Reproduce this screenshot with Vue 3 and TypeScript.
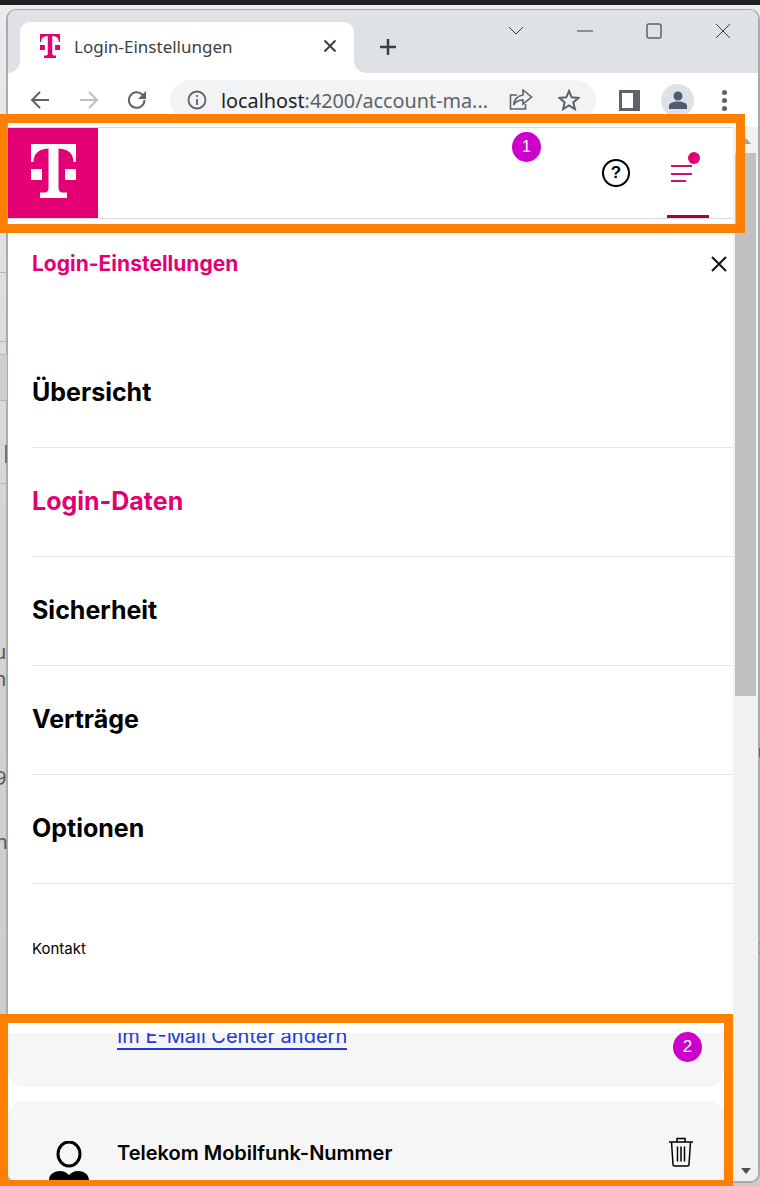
<template>
  <div class="screen">
    <div class="topbar"></div>

    <!-- bits of the page behind the browser window -->
    <div class="behind">
      <div class="band"></div>
      <i v-for="top in behindRules" :key="top" class="rule" :style="{ top: top + 'px' }"></i>
      <i class="tick"></i>
      <span
        v-for="frag in behindText"
        :key="frag.text"
        class="frag"
        :style="{ top: frag.top + 'px', left: frag.left + 'px' }"
      >{{ frag.text }}</span>
    </div>

    <div class="window">
      <div class="tabstrip">
        <div class="tab">
          <svg class="favicon" viewBox="0 0 45 54" aria-hidden="true">
            <path d="M0 0h45v18h-2.500c-.2-8-4.500-13-15-13.500V43c0 4 1.500 5.500 4.500 5.500H36V54H9v-5.500h4.500c3 0 4-1.500 4-5.500V4.500C7 5 2.700 10 2.500 18H0z" />
            <path d="M0 25h11v11H0zM34 25h11v11H34z" />
          </svg>
          <span class="tab-title">Login-Einstellungen</span>
          <svg class="tab-close" viewBox="0 0 14 14" aria-hidden="true">
            <path d="M1.500 1.500l11 11M12.500 1.500l-11 11" />
          </svg>
        </div>
        <svg class="new-tab" viewBox="0 0 18 18" aria-hidden="true">
          <path d="M9 1v16M1 9h16" />
        </svg>
        <div class="win-controls">
          <svg viewBox="0 0 16 10" class="ctl chev" aria-hidden="true"><path d="M1 1l7 7 7-7" /></svg>
          <svg viewBox="0 0 16 2" class="ctl min" aria-hidden="true"><path d="M0 1h16" /></svg>
          <svg viewBox="0 0 16 16" class="ctl max" aria-hidden="true"><rect x="1" y="1" width="14" height="14" rx="2" /></svg>
          <svg viewBox="0 0 16 16" class="ctl cls" aria-hidden="true"><path d="M1 1l14 14M15 1L1 15" /></svg>
        </div>
      </div>

      <div class="toolbar">
        <svg class="nav back" viewBox="0 0 22 22" aria-hidden="true"><path d="M20 11H3M11 3l-8 8 8 8" /></svg>
        <svg class="nav fwd" viewBox="0 0 22 22" aria-hidden="true"><path d="M2 11h17M11 3l8 8-8 8" /></svg>
        <svg class="nav reload" viewBox="0 0 22 22" aria-hidden="true">
          <path d="M18.500 11a7.800 7.800 0 1 1-2.300-5.500L18.500 8" />
          <path class="fill" d="M20 2v8h-8z" />
        </svg>
        <div class="omnibox">
          <svg class="info" viewBox="0 0 20 20" aria-hidden="true">
            <circle cx="10" cy="10" r="8.500" />
            <path d="M10 9v6M10 5v2" />
          </svg>
          <span class="url"><b>localhost</b>:4200/account-ma...</span>
          <svg class="share" viewBox="0 0 24 22" aria-hidden="true">
            <path d="M8 6H1.500v14h15v-5" />
            <path d="M14 1l8.500 7-8.500 7v-4c-4 0-7 1-9.500 5 .6-5 3.500-9 9.500-10z" />
          </svg>
          <svg class="star" viewBox="0 0 22 22" aria-hidden="true">
            <path d="M11 2l2.700 6.300 6.800.6-5.200 4.500 1.600 6.700L11 16.500l-5.900 3.600 1.600-6.700L1.500 8.900l6.800-.6z" />
          </svg>
        </div>
        <svg class="side" viewBox="0 0 21 21" aria-hidden="true">
          <path fill-rule="evenodd" d="M0 0h21v21H0zM3 3v15h11V3z" />
        </svg>
        <div class="avatar">
          <svg viewBox="0 0 20 20" aria-hidden="true">
            <circle cx="10" cy="6" r="4.500" />
            <path d="M1 19v-3c0-3 4-4.500 9-4.500s9 1.500 9 4.500v3z" />
          </svg>
        </div>
        <div class="kebab"><i></i><i></i><i></i></div>
      </div>

      <div class="page">
        <div class="main">
          <header class="site-header">
            <div class="logo">
              <svg viewBox="0 0 45 54" aria-hidden="true">
                <path d="M0 0h45v18h-2.500c-.2-8-4.500-13-15-13.500V43c0 4 1.500 5.500 4.500 5.500H36V54H9v-5.500h4.500c3 0 4-1.500 4-5.500V4.500C7 5 2.700 10 2.500 18H0z" />
                <path d="M0 25h11v11H0zM34 25h11v11H34z" />
              </svg>
            </div>
            <div class="header-actions">
              <div class="help">?</div>
              <div class="burger">
                <i class="l1"></i><i class="l2"></i><i class="l3"></i>
                <span class="dot"></span>
              </div>
            </div>
          </header>

          <section class="menu">
            <div class="menu-head">
              <span class="menu-title">Login-Einstellungen</span>
              <svg class="menu-close" viewBox="0 0 16 16" aria-hidden="true"><path d="M1 1l14 14M15 1L1 15" /></svg>
            </div>
            <ul class="menu-list">
              <li v-for="item in items" :key="item" :class="{ active: item === active }">{{ item }}</li>
            </ul>
            <div class="contact">Kontakt</div>
          </section>

          <div class="cards">
            <div class="card card-cut">
              <a class="link">Im E-Mail Center ändern</a>
            </div>
            <div class="card card-next">
              <svg class="person" viewBox="0 0 42 44" aria-hidden="true">
                <ellipse class="head" cx="21" cy="13" rx="11" ry="12" />
                <path d="M1 44V39c0-6 6-9 11-9 4 0 7 2 9 4 2-2 5-4 9-4 5 0 11 3 11 9v5z" />
              </svg>
              <span class="card-title">Telekom Mobilfunk-Nummer</span>
              <svg class="trash" viewBox="0 0 26 30" aria-hidden="true">
                <path d="M1 5h24M9 5V1.500h8V5M3.500 5l1.500 22.500c0 1 .8 1.500 1.500 1.500h13c.7 0 1.500-.5 1.500-1.500L22.500 5M9.500 9.500v15M13 9.500v15M16.500 9.500v15" />
              </svg>
            </div>
          </div>
        </div>

        <div class="scrollbar">
          <span class="arrow up"></span>
          <div class="thumb"></div>
          <span class="arrow down"></span>
        </div>
      </div>
    </div>

    <!-- slivers of the page behind, on the right edge -->
    <i class="sliver s1"></i>
    <i class="sliver s2"></i>
    <i class="sliver s3"></i>

    <!-- annotations on top of the screenshot -->
    <div class="mark mark-one"></div>
    <div class="mark mark-two"></div>
    <span class="badge badge-one">1</span>
    <span class="badge badge-two">2</span>
  </div>
</template>

<script setup lang="ts">
const items: string[] = ["Übersicht", "Login-Daten", "Sicherheit", "Verträge", "Optionen"];
const active = "Login-Daten";

const behindRules: number[] = [272, 341, 354, 400, 483];
const behindText = [
  { text: "u", top: 640, left: -6 },
  { text: "n", top: 667, left: -6 },
  { text: "9", top: 766, left: -5 },
  { text: "m", top: 830, left: -11 },
];
</script>

<style scoped>
.screen {
  position: relative;
  width: 760px;
  height: 1186px;
  overflow: hidden;
  background: linear-gradient(#ececec, #d4d4d4 45%, #cbcbcb);
  font-family: "Noto Sans", "Open Sans", sans-serif;
}

.topbar {
  height: 5px;
  background: #202124;
}

.behind {
  position: absolute;
  left: 0;
  top: 0;
  width: 7px;
  height: 100%;
  overflow: hidden;
}

.band {
  position: absolute;
  left: 0;
  top: 354px;
  width: 7px;
  height: 46px;
  background: #ccced2;
}

.rule {
  position: absolute;
  left: 0;
  width: 7px;
  height: 1px;
  background: #b4b6ba;
}

.tick {
  position: absolute;
  left: 5px;
  top: 445px;
  width: 2px;
  height: 18px;
  background: #6e7074;
}

.frag {
  position: absolute;
  font-size: 20px;
  line-height: 24px;
  color: #55585c;
}

.window {
  display: flex;
  flex-direction: column;
  height: 1174px;
  box-sizing: border-box;
  margin: 4px 0 0 6px;
  border: 2px solid #a9abad;
  border-top-width: 1px;
  border-radius: 10px;
  overflow: hidden;
  background: #fff;
}

.tabstrip {
  display: flex;
  flex: none;
  align-items: flex-end;
  height: 63px;
  padding-left: 12px;
  background: #dee1e6;
}

.tab {
  position: relative;
  display: flex;
  flex: none;
  align-items: center;
  width: 334px;
  height: 51px;
  padding: 0 17px 3px 20px;
  box-sizing: border-box;
  border-radius: 10px 10px 0 0;
  background: #fff;
}

.tab::before,
.tab::after {
  content: "";
  position: absolute;
  bottom: 0;
  width: 12px;
  height: 12px;
}

.tab::before {
  left: -12px;
  background: radial-gradient(circle at 0 0, #dee1e6 11.500px, #fff 12px);
}

.tab::after {
  right: -12px;
  background: radial-gradient(circle at 100% 0, #dee1e6 11.500px, #fff 12px);
}

.favicon {
  flex: none;
  width: 20px;
  height: 24px;
  fill: #e20074;
}

.tab-title {
  margin-left: 14px;
  font-size: 17px;
  color: #3c4043;
}

.tab-close {
  flex: none;
  width: 14px;
  height: 14px;
  margin-left: auto;
  fill: none;
  stroke: #3c4043;
  stroke-width: 2;
}

.new-tab {
  flex: none;
  width: 18px;
  height: 18px;
  margin: 0 0 17px 25px;
  fill: none;
  stroke: #3c4043;
  stroke-width: 2.500;
}

.win-controls {
  display: flex;
  align-self: flex-start;
  align-items: center;
  margin-left: auto;
  height: 42px;
  padding-right: 27px;
  gap: 53px;
}

.ctl {
  width: 16px;
  height: 16px;
  fill: none;
  stroke: #3a3c3f;
  stroke-width: 1;
}

.chev {
  height: 10px;
}

.min {
  height: 2px;
}

.max {
  stroke: #5f6368;
  stroke-width: 1.500;
}

.toolbar {
  display: flex;
  flex: none;
  align-items: center;
  height: 54px;
  box-sizing: border-box;
  background: #fff;
}

.nav {
  flex: none;
  width: 22px;
  height: 22px;
  fill: none;
  stroke: #5f6368;
  stroke-width: 2;
}

.nav.back {
  margin-left: 21px;
}

.nav.fwd {
  margin-left: 27px;
  stroke: #bdc1c6;
}

.nav.reload {
  margin-left: 26px;
}

.nav .fill {
  fill: #5f6368;
  stroke: none;
}

.omnibox {
  display: flex;
  flex: none;
  align-items: center;
  width: 426px;
  height: 41px;
  margin-left: 22px;
  padding: 0 16px 0 17px;
  box-sizing: border-box;
  border-radius: 21px;
  background: #f1f3f4;
}

.info {
  flex: none;
  width: 20px;
  height: 20px;
  fill: none;
  stroke: #5f6368;
  stroke-width: 1.800;
}

.url {
  margin-left: 14px;
  font-size: 19.800px;
  white-space: nowrap;
  color: #5f6368;
}

.url b {
  font-weight: 400;
  color: #202124;
}

.share {
  flex: none;
  width: 24px;
  height: 22px;
  margin-left: auto;
  fill: none;
  stroke: #5f6368;
  stroke-width: 1.600;
}

.star {
  flex: none;
  width: 22px;
  height: 22px;
  margin-left: 25px;
  fill: none;
  stroke: #5f6368;
  stroke-width: 2;
}

.side {
  flex: none;
  width: 21px;
  height: 21px;
  margin-left: 23px;
  fill: #5f6368;
}

.avatar {
  display: flex;
  flex: none;
  align-items: center;
  justify-content: center;
  width: 33px;
  height: 33px;
  margin-left: 21px;
  border-radius: 50%;
  background: #dee1e6;
}

.avatar svg {
  width: 20px;
  height: 20px;
  fill: #4f5b70;
}

.kebab {
  display: flex;
  flex: none;
  flex-direction: column;
  gap: 3px;
  margin-left: 28px;
}

.kebab i {
  width: 5px;
  height: 5px;
  border-radius: 50%;
  background: #5f6368;
}

.page {
  display: flex;
  flex: 1;
  min-height: 0;
}

.main {
  display: flex;
  flex: 1;
  flex-direction: column;
  min-width: 0;
  background: #fff;
}

.site-header {
  display: flex;
  flex: none;
  height: 92px;
  box-sizing: border-box;
  border-top: 1px solid #d9d9d9;
  border-bottom: 1px solid #d9d9d9;
}

.logo {
  display: flex;
  align-items: center;
  justify-content: center;
  width: 90px;
  height: 90px;
  background: #e20074;
}

.logo svg {
  width: 45px;
  height: 54px;
  margin-bottom: 4px;
  fill: #fff;
}

.header-actions {
  display: flex;
  align-items: flex-start;
  margin-left: auto;
  padding-right: 24px;
}

.help {
  width: 24px;
  height: 24px;
  margin: 31px 37px 0 0;
  border: 2px solid #000;
  border-radius: 50%;
  font-family: "Liberation Sans", sans-serif;
  font-size: 17px;
  font-weight: 700;
  line-height: 24px;
  text-align: center;
  color: #000;
}

.burger {
  position: relative;
  display: flex;
  flex-direction: column;
  width: 42px;
  height: 90px;
  box-sizing: border-box;
  padding: 37px 0 0 4px;
  gap: 5.500px;
  border-bottom: 3px solid #a10050;
}

.burger i {
  display: block;
  height: 2px;
  background: #d0106f;
}

.l1 {
  width: 21px;
}

.l2 {
  width: 21px;
}

.l3 {
  width: 15px;
}

.dot {
  position: absolute;
  top: 24px;
  left: 21px;
  width: 12px;
  height: 12px;
  border-radius: 50%;
  background: #e20074;
}

.menu {
  flex: none;
  height: 814px;
  padding-left: 24px;
  box-sizing: border-box;
}

.menu-head {
  display: flex;
  align-items: center;
  justify-content: space-between;
  height: 88px;
  margin-bottom: 28px;
}

.menu-title {
  font-family: "Inter", sans-serif;
  font-size: 21px;
  font-weight: 700;
  color: #e20074;
}

.menu-close {
  width: 16px;
  height: 16px;
  margin: 2px 6px 0 0;
  fill: none;
  stroke: #111;
  stroke-width: 2;
}

.menu-list {
  margin: 0;
  padding: 0;
  list-style: none;
}

.menu-list li {
  height: 109px;
  box-sizing: border-box;
  border-bottom: 1px solid #e5e5e5;
  padding-top: 35px;
  font-family: "Inter", sans-serif;
  font-size: 25px;
  font-weight: 700;
  line-height: 36px;
  color: #000;
}

.menu-list li:first-child {
  padding-top: 39px;
  height: 113px;
}

.menu-list li.active {
  color: #e20074;
}

.contact {
  padding-top: 55px;
  font-family: "Inter", sans-serif;
  font-size: 15px;
  line-height: 20px;
  color: #000;
}

.cards {
  flex: 1;
  min-height: 0;
  overflow: hidden;
  padding-right: 9px;
  background: #fff;
}

.card {
  background: #f6f6f6;
  overflow: hidden;
}

.card-cut {
  height: 54px;
  padding-left: 109px;
  border-radius: 0 0 16px 16px;
}

.link {
  display: block;
  width: fit-content;
  margin-top: -9px;
  border-bottom: 2px solid #2238df;
  font-family: "Inter", sans-serif;
  font-size: 20px;
  line-height: 24px;
  color: #2238df;
}

.card-next {
  display: flex;
  align-items: flex-start;
  height: 110px;
  margin-top: 14px;
  border-radius: 16px 16px 0 0;
}

.person {
  flex: none;
  width: 42px;
  height: 44px;
  margin: 40px 0 0 40px;
  fill: #000;
}

.head {
  fill: none;
  stroke: #000;
  stroke-width: 3;
}

.card-title {
  margin: 38px 0 0 27px;
  font-family: "Inter", sans-serif;
  font-size: 20px;
  font-weight: 600;
  line-height: 28px;
  color: #000;
}

.trash {
  flex: none;
  width: 26px;
  height: 30px;
  margin: 36px 30px 0 auto;
  fill: none;
  stroke: #000;
  stroke-width: 1.500;
}

.scrollbar {
  display: flex;
  flex: none;
  flex-direction: column;
  width: 25px;
  background: #f1f1f1;
}

.arrow {
  flex: none;
  width: 0;
  height: 0;
  margin: 0 auto;
  border-left: 5px solid transparent;
  border-right: 5px solid transparent;
}

.arrow.up {
  margin-top: 11px;
  margin-bottom: 9px;
  border-bottom: 6px solid #a3a3a3;
}

.arrow.down {
  margin-top: auto;
  margin-bottom: 7px;
  border-top: 6px solid #505050;
}

.thumb {
  flex: none;
  width: 21px;
  height: 543px;
  margin-left: 2px;
  background: #c1c1c1;
}

.sliver {
  position: absolute;
  right: 0;
  width: 1px;
}

.s1 {
  top: 748px;
  height: 9px;
  background: #3a6d9a;
}

.s2 {
  top: 943px;
  height: 1px;
  background: #5a88c8;
}

.s3 {
  top: 952px;
  height: 1px;
  background: #5a88c8;
}

.mark {
  position: absolute;
  box-sizing: border-box;
  border: 9px solid #ff8000;
}

.mark-one {
  left: -2px;
  top: 114px;
  width: 747px;
  height: 119px;
}

.mark-two {
  left: -1px;
  top: 1014px;
  width: 734px;
  height: 172px;
  border-bottom-width: 6px;
}

.badge {
  position: absolute;
  width: 29px;
  height: 30px;
  border-radius: 50%;
  background: #cc00cc;
  font-family: "Liberation Sans", sans-serif;
  font-size: 16px;
  line-height: 30px;
  text-align: center;
  color: #fff;
}

.badge-one {
  left: 512px;
  top: 132px;
}

.badge-two {
  left: 673px;
  top: 1032px;
  font-size: 17px;
}
</style>
